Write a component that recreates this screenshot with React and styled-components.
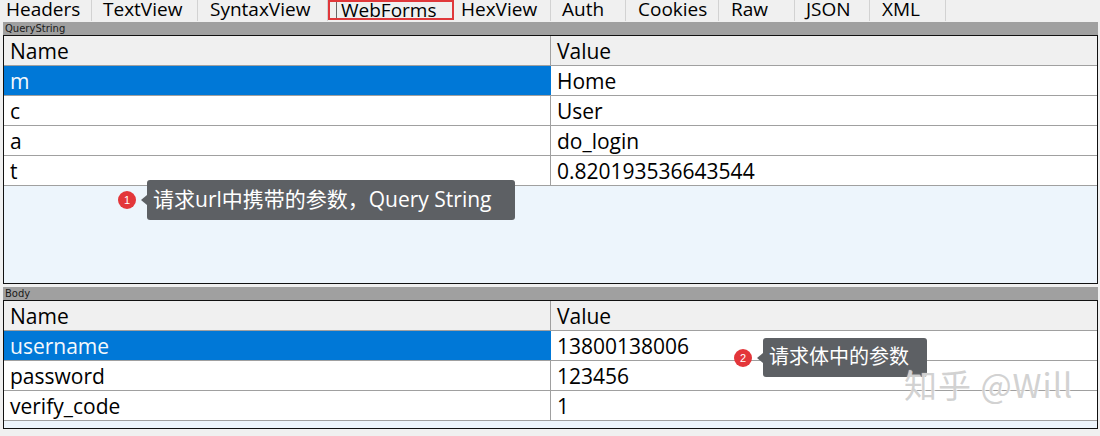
import React from "react";
import styled, { createGlobalStyle } from "styled-components";

const GlobalStyle = createGlobalStyle`
  html, body {
    margin: 0;
    padding: 0;
    background: #f0f0f0;
  }
  body {
    width: 1100px;
    height: 436px;
    overflow: hidden;
    font-family: "Open Sans", "Noto Sans CJK SC", sans-serif;
  }
`;

const Page = styled.div`
  position: relative;
  width: 1100px;
  height: 436px;
  background: #f0f0f0;
  overflow: hidden;
`;

const TabBar = styled.div`
  display: flex;
  height: 22px;
  overflow: hidden;
  background: #f0f0f0;
`;

const Tab = styled.div`
  box-sizing: border-box;
  width: ${({ w }) => w}px;
  height: ${({ boxed }) => (boxed ? 20 : 21)}px;
  padding-left: ${({ pad }) => pad}px;
  font-size: 19px;
  line-height: 19px;
  color: #000;
  white-space: nowrap;
  overflow: hidden;
  border-right: ${({ boxed }) => (boxed ? "none" : "1px solid #d2d2d2")};
  ${({ boxed }) =>
    boxed &&
    `
    border: 2px solid #e0383b;
    line-height: 17px;
  `}
`;

const TabInner = styled.span`
  display: inline-block;
  border-left: ${({ boxed }) => (boxed ? "1px solid #666" : "none")};
  padding-left: ${({ boxed }) => (boxed ? 4 : 0)}px;
  height: 100%;
`;

const Section = styled.div`
  margin: 0 2px 3px 3px;
`;

const SectionLabel = styled.div`
  height: 13px;
  background: #a0a0a0;
  font-family: "DejaVu Sans", sans-serif;
  font-size: 10px;
  line-height: 13px;
  padding-left: 2px;
  color: #1a1a1a;
`;

const Panel = styled.div`
  box-sizing: border-box;
  height: ${({ h }) => h}px;
  border: 1px solid #111;
  background: #edf5fc;
  display: flex;
  flex-direction: column;
`;

const Row = styled.div`
  display: grid;
  grid-template-columns: 547px 1fr;
  height: 30px;
  box-sizing: border-box;
  border-bottom: 1px solid #a0a0a0;
  background: ${({ head }) => (head ? "#f0f0f0" : "#fff")};
  font-size: 21px;
  line-height: 27px;
  color: #000;
`;

const Cell = styled.div`
  padding: 2px 0 0 6px;
  white-space: nowrap;
  ${({ first, selected }) =>
    first &&
    `border-right: 1px solid ${selected ? "#0078d7" : "#a0a0a0"};`}
  ${({ selected }) =>
    selected &&
    `
    background: #0078d7;
    color: #f4f8fc;
  `}
`;

const Note = styled.div`
  position: absolute;
  left: ${({ x }) => x}px;
  top: ${({ y }) => y}px;
  display: flex;
  align-items: center;
`;

const Badge = styled.div`
  width: 18px;
  height: 18px;
  border-radius: 50%;
  background: #e3363a;
  color: #fff;
  font-size: 11px;
  line-height: 18px;
  text-align: center;
  font-family: "Liberation Sans", sans-serif;
`;

const Arrow = styled.div`
  width: 0;
  height: 0;
  margin-left: 5px;
  border-top: 5px solid transparent;
  border-bottom: 5px solid transparent;
  border-right: 6px solid #5d6064;
`;

const Bubble = styled.div`
  box-sizing: border-box;
  width: ${({ w }) => w}px;
  height: ${({ h }) => h}px;
  padding-left: 6px;
  border-radius: 3px;
  background: #5d6064;
  color: #fff;
  font-size: ${({ fs }) => fs}px;
  line-height: ${({ h }) => h - 2}px;
  white-space: nowrap;
`;

const Watermark = styled.div`
  position: absolute;
  left: 904px;
  top: 360px;
  font-family: "Noto Sans CJK SC", sans-serif;
  font-size: 33px;
  letter-spacing: 1px;
  color: rgba(195, 195, 195, 0.75);
  text-shadow: 0 0 1px #fff, 1px 1px 0 rgba(255, 255, 255, 0.6);
  white-space: nowrap;
`;

const tabs = [
  { label: "Headers", w: 92, pad: 6 },
  { label: "TextView", w: 106, pad: 11 },
  { label: "SyntaxView", w: 130, pad: 12 },
  { label: "WebForms", w: 126, pad: 6, boxed: true },
  { label: "HexView", w: 97, pad: 7 },
  { label: "Auth", w: 75, pad: 11 },
  { label: "Cookies", w: 93, pad: 12 },
  { label: "Raw", w: 76, pad: 12 },
  { label: "JSON", w: 75, pad: 11 },
  { label: "XML", w: 76, pad: 12 },
];

const queryRows = [
  ["m", "Home"],
  ["c", "User"],
  ["a", "do_login"],
  ["t", "0.820193536643544"],
];

const bodyRows = [
  ["username", "13800138006"],
  ["password", "123456"],
  ["verify_code", "1"],
];

function Grid({ rows, selected }) {
  return (
    <>
      <Row head>
        <Cell first>Name</Cell>
        <Cell>Value</Cell>
      </Row>
      {rows.map(([name, value], i) => (
        <Row key={name}>
          <Cell first selected={i === selected}>
            {name}
          </Cell>
          <Cell>{value}</Cell>
        </Row>
      ))}
    </>
  );
}

export default function App() {
  return (
    <Page>
      <GlobalStyle />
      <TabBar>
        {tabs.map((t) => (
          <Tab key={t.label} w={t.w} pad={t.pad} boxed={t.boxed}>
            <TabInner boxed={t.boxed}>{t.label}</TabInner>
          </Tab>
        ))}
      </TabBar>
      <Section>
        <SectionLabel>QueryString</SectionLabel>
        <Panel h={249}>
          <Grid rows={queryRows} selected={0} />
        </Panel>
      </Section>
      <Section>
        <SectionLabel>Body</SectionLabel>
        <Panel h={129}>
          <Grid rows={bodyRows} selected={0} />
        </Panel>
      </Section>

      <Note x={118} y={180}>
        <Badge>1</Badge>
        <Arrow />
        <Bubble w={368} h={40} fs={21}>
          请求url中携带的参数，Query String
        </Bubble>
      </Note>
      <Note x={734} y={338}>
        <Badge>2</Badge>
        <Arrow />
        <Bubble w={164} h={39} fs={20}>
          请求体中的参数
        </Bubble>
      </Note>
      <Watermark>知乎 @Will</Watermark>
    </Page>
  );
}
